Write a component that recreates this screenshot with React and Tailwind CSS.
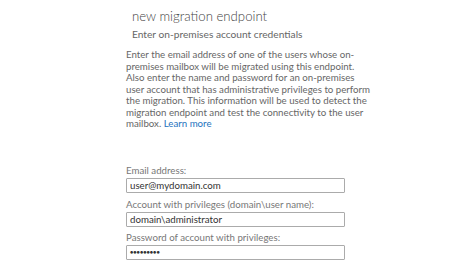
const lines = [
  "Enter the email address of one of the users whose on-",
  "premises mailbox will be migrated using this endpoint.",
  "Also enter the name and password for an on-premises",
  "user account that has administrative privileges to perform",
  "the migration. This information will be used to detect the",
  "migration endpoint and test the connectivity to the user",
];

export default function App() {
  return (
    <div className="w-[474px] h-[270px] bg-white overflow-hidden">
      <div className="pl-[126px] pt-[8px] w-[474px] font-['Lato',sans-serif]">
        <div className="pl-[6px] text-[13.2px] leading-[17px] font-light text-[#444]">new migration endpoint</div>
        <div className="pl-[6px] mt-[3px] text-[10.2px] leading-[13px] text-[#666]">Enter on-premises account credentials</div>
        <div className="mt-[8px] text-[9.7px] leading-[11.5px] text-[#666]">
          {lines.map((l) => (
            <div key={l} className="whitespace-nowrap">{l}</div>
          ))}
          <div className="whitespace-nowrap">mailbox. <span className="text-[#1e73be]">Learn more</span></div>
        </div>
        <div className="mt-[34px] flex flex-col w-[219px]">
          <label className="text-[9.7px] leading-[12px] text-[#777]">Email address:</label>
          <div className="mt-[2px] h-[15px] border border-[#ababab] rounded-[1px] px-[3px] text-[9.7px] leading-[13px] text-[#333]">user@mydomain.com</div>
          <label className="mt-[5px] text-[9.7px] leading-[12px] text-[#777]">Account with privileges (domain\user name):</label>
          <div className="mt-[2px] h-[15px] border border-[#ababab] rounded-[1px] px-[3px] text-[9.7px] leading-[13px] text-[#333]">domain\administrator</div>
          <label className="mt-[4px] text-[9.7px] leading-[12px] text-[#777]">Password of account with privileges:</label>
          <div className="mt-[2px] h-[15px] border border-[#ababab] rounded-[1px] px-[3px] text-[5.5px] leading-[13px] text-[#333]">●●●●●●●●●</div>
        </div>
      </div>
    </div>
  );
}
